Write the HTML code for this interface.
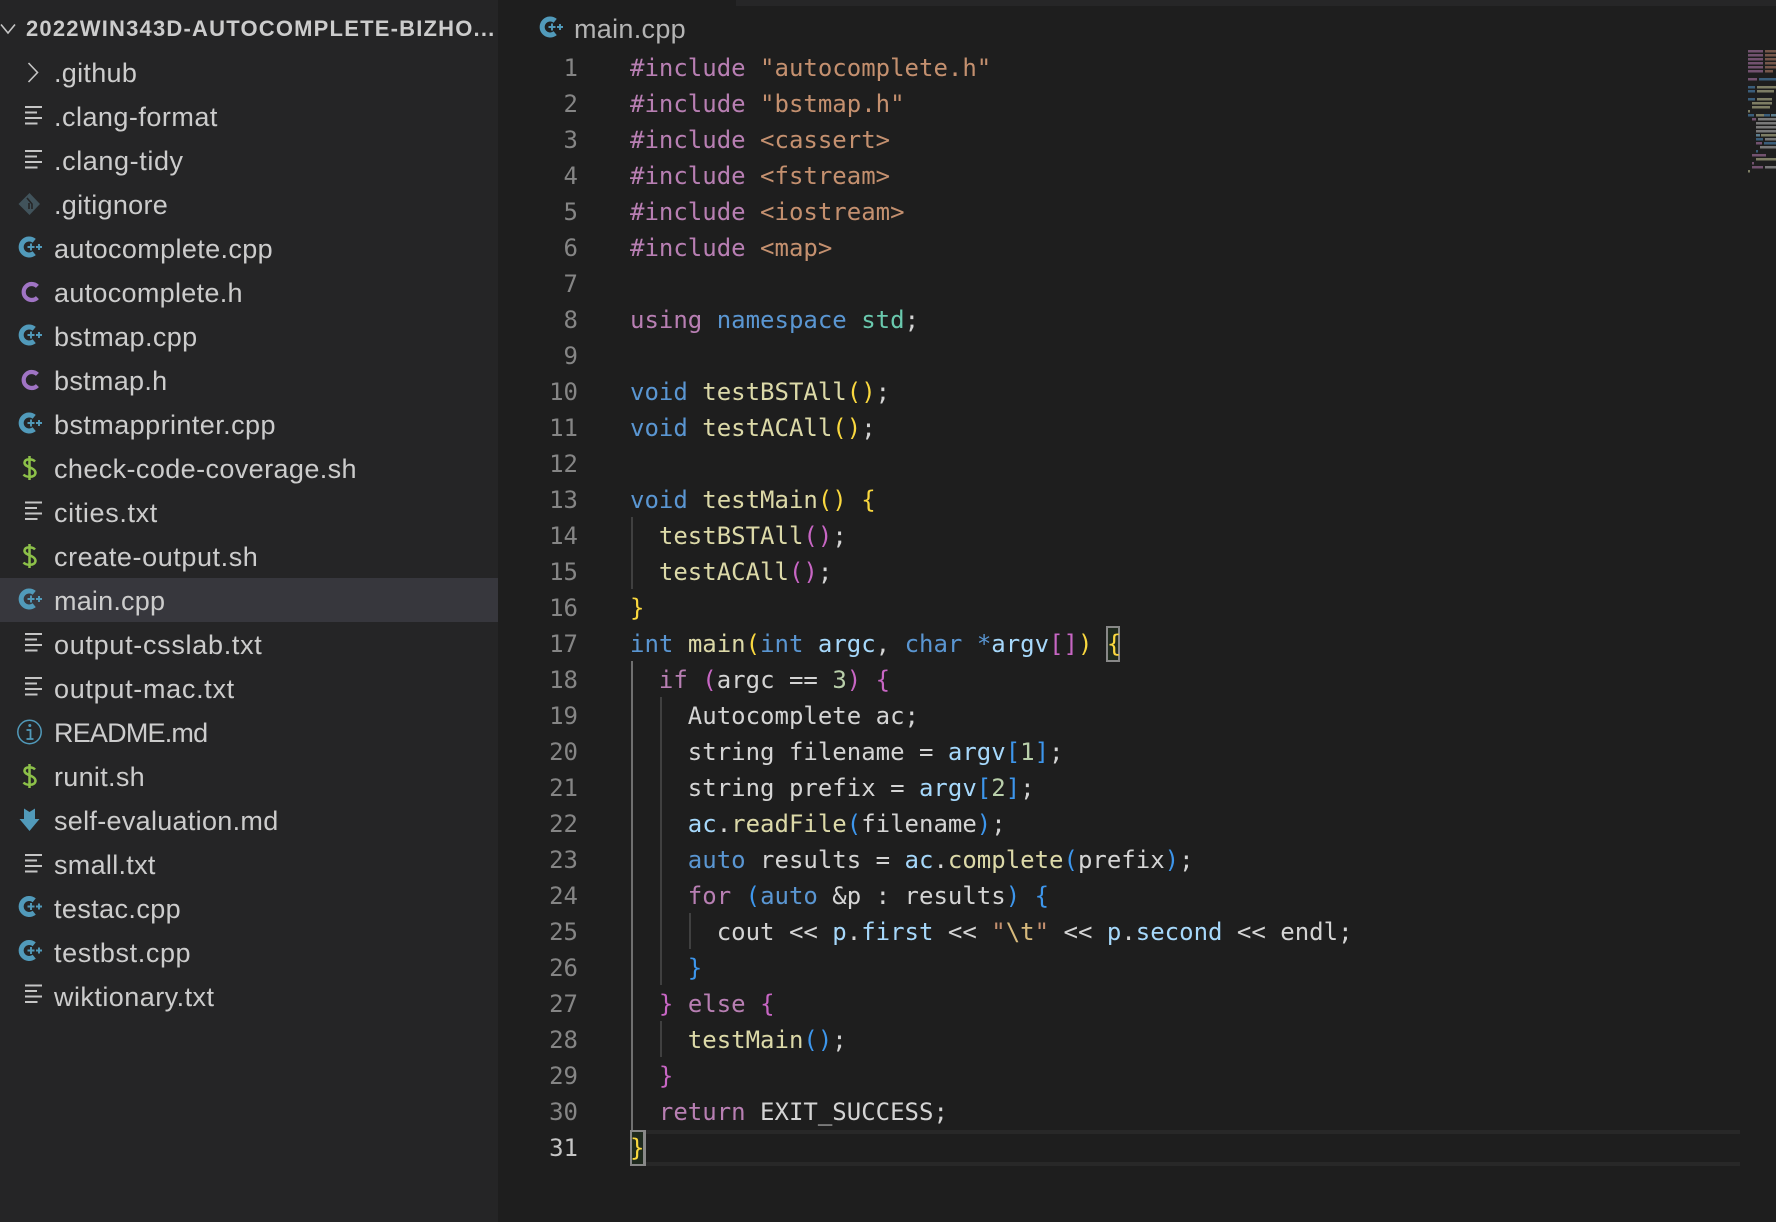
<!DOCTYPE html>
<html lang="en"><head><meta charset="utf-8"><title>main.cpp</title>
<style>
html,body{margin:0;padding:0;background:#1e1e1e}
body{width:1776px;height:1222px;position:relative;overflow:hidden;filter:blur(.35px)}
#side{position:absolute;left:0;top:0;width:498px;height:1222px;background:#252526}
.hd{position:absolute;left:26px;top:15px;font:bold 22px/28px "Liberation Sans",sans-serif;color:#ccc;white-space:nowrap;letter-spacing:1.2px}
.r{position:absolute;left:54px;height:44px;margin-top:1px;font:27px/44px "Liberation Sans",sans-serif;letter-spacing:.3px;color:#ccc;white-space:nowrap}
.act{position:absolute;left:0;top:578px;width:498px;height:44px;background:#37373d}
#ic{position:absolute;left:0;top:0}
.tab{position:absolute;left:574px;top:7px;font:27px/44px "Liberation Sans",sans-serif;letter-spacing:.3px;color:#b4b4b4}
.topbar{position:absolute;left:736px;top:0;width:1040px;height:6px;background:#262627}
.ln{position:absolute;left:520px;width:58px;margin-top:1px;text-align:right;font:24px/36px "DejaVu Sans Mono",monospace;color:#858585}
.c{position:absolute;left:630px;margin-top:1px;font:24px/36px "DejaVu Sans Mono",monospace;color:#d4d4d4;white-space:pre}
.g{position:absolute;width:1.5px;background:#404040}
.cur{position:absolute;left:631px;top:1130px;width:1109px;height:28px;border:4px solid #282828;border-left:0;border-right:0}
.bx{position:absolute;box-sizing:border-box;border:2px solid #888;background:#1f2a1e}
.k{color:#b87fb3}.b{color:#5a96d2}.s{color:#c4906f}.f{color:#dcd9a8}.v{color:#a6d8fb}.t{color:#6ac9ae}.n{color:#b9cfaa}.e{color:#d7ba7d}
.y{color:#fad83f}.m{color:#c866c4}.u{color:#3d96ec}
#mm{position:absolute;left:1748px;top:50px;opacity:.5}
</style></head><body>
<div class="topbar"></div>
<div id="side"></div>
<div class="act"></div>
<div class="hd">2022WIN343D-AUTOCOMPLETE-BIZHO...</div>
<div class="r" style="top:50px">.github</div>
<div class="r" style="top:94px;letter-spacing:.48px">.clang-format</div>
<div class="r" style="top:138px;letter-spacing:.6px">.clang-tidy</div>
<div class="r" style="top:182px">.gitignore</div>
<div class="r" style="top:226px;letter-spacing:.37px">autocomplete.cpp</div>
<div class="r" style="top:270px">autocomplete.h</div>
<div class="r" style="top:314px;letter-spacing:.4px">bstmap.cpp</div>
<div class="r" style="top:358px">bstmap.h</div>
<div class="r" style="top:402px;letter-spacing:.43px">bstmapprinter.cpp</div>
<div class="r" style="top:446px;letter-spacing:.4px">check-code-coverage.sh</div>
<div class="r" style="top:490px;letter-spacing:.64px">cities.txt</div>
<div class="r" style="top:534px;letter-spacing:.58px">create-output.sh</div>
<div class="r" style="top:578px;letter-spacing:.2px">main.cpp</div>
<div class="r" style="top:622px;letter-spacing:.7px">output-csslab.txt</div>
<div class="r" style="top:666px;letter-spacing:.7px">output-mac.txt</div>
<div class="r" style="top:710px;letter-spacing:-.8px">README.md</div>
<div class="r" style="top:754px">runit.sh</div>
<div class="r" style="top:798px">self-evaluation.md</div>
<div class="r" style="top:842px">small.txt</div>
<div class="r" style="top:886px;letter-spacing:.4px">testac.cpp</div>
<div class="r" style="top:930px;letter-spacing:.6px">testbst.cpp</div>
<div class="r" style="top:974px;letter-spacing:.46px">wiktionary.txt</div>
<svg id="ic" width="600" height="1040" viewBox="0 0 600 1040" fill="none">
<defs>
<g id="cpp"><path d="M6.2 -6.2A8 8 0 1 0 6.2 6.2" stroke="#519aba" stroke-width="5"/><path d="M3 -3.5V3.5M-.5 0H6.5M11 -3V3M8 0H14" stroke="#519aba" stroke-width="1.9"/></g>
<g id="txt"><path d="M25 -9.5H42M25 -4H37M25 1.5H42M25 7H37.5" stroke="#c5c5c5" stroke-width="2"/></g>
<g id="sh"><path d="M35 -6.5C33 -9 25 -10 24.5 -5.5C24 -.5 35.5 -1 35.5 5C35 10 26 9.5 23.5 6.5M29.5 -12V12" stroke="#8dc149" stroke-width="2.5"/></g>
<g id="h"><path d="M37.4 -5.6A8 8 0 1 0 37.4 5.6" stroke="#a074c4" stroke-width="4.2"/></g>
</defs>
<path d="M1 24.5L8 33L15 24.5" stroke="#c5c5c5" stroke-width="1.6"/>
<path d="M28.5 63L37.5 72.5L28.5 82" stroke="#c5c5c5" stroke-width="1.6"/>
<use href="#txt" y="116.5"/><use href="#txt" y="160.5"/>
<path d="M29.5 193L40 204L29.5 215L18.500 204Z" fill="#41535b"/><path d="M27 198L32 204V209M29 203V209" stroke="#252526" stroke-width="1.6"/>
<use href="#cpp" x="28" y="247"/>
<use href="#h" y="292"/>
<use href="#cpp" x="28" y="335"/>
<use href="#h" y="380"/>
<use href="#cpp" x="28" y="423"/>
<use href="#sh" y="468"/>
<use href="#txt" y="512"/>
<use href="#sh" y="556"/>
<use href="#cpp" x="28" y="599"/>
<use href="#txt" y="643.500"/><use href="#txt" y="687.500"/>
<circle cx="29.500" cy="732" r="11.700" stroke="#519aba" stroke-width="1.500"/><path d="M26.500 730H30.500V739M26.500 739H33.500" stroke="#519aba" stroke-width="1.800"/><circle cx="29.800" cy="725.500" r="1.500" fill="#519aba"/>
<use href="#sh" y="776"/>
<path d="M24 808.500L29.500 812L35 808.500V819H39.500L29.500 831L19.500 819H24Z" fill="#519aba"/>
<use href="#txt" y="864.500"/>
<use href="#cpp" x="28" y="906.500"/>
<use href="#cpp" x="28" y="950.500"/>
<use href="#txt" y="995"/>
<use href="#cpp" x="549" y="27"/>
</svg>
<div class="tab">main.cpp</div>

<div class="cur"></div>
<div class="g" style="left:631px;top:517px;height:72px"></div>
<div class="g" style="left:631px;top:661px;height:469px;width:2px;background:#707070"></div>
<div class="g" style="left:660px;top:697px;height:288px"></div>
<div class="g" style="left:660px;top:1021px;height:36px"></div>
<div class="g" style="left:689px;top:913px;height:36px"></div>
<div class="bx" style="left:1106px;top:626px;width:14px;height:36px"></div>
<div class="bx" style="left:630px;top:1130px;width:16px;height:36px;border-right-width:3px"></div>

<div class="ln" style="top:49px">1</div><div class="c" style="top:49px"><span class="k">#include</span> <span class="s">"autocomplete.h"</span></div>
<div class="ln" style="top:85px">2</div><div class="c" style="top:85px"><span class="k">#include</span> <span class="s">"bstmap.h"</span></div>
<div class="ln" style="top:121px">3</div><div class="c" style="top:121px"><span class="k">#include</span> <span class="s">&lt;cassert&gt;</span></div>
<div class="ln" style="top:157px">4</div><div class="c" style="top:157px"><span class="k">#include</span> <span class="s">&lt;fstream&gt;</span></div>
<div class="ln" style="top:193px">5</div><div class="c" style="top:193px"><span class="k">#include</span> <span class="s">&lt;iostream&gt;</span></div>
<div class="ln" style="top:229px">6</div><div class="c" style="top:229px"><span class="k">#include</span> <span class="s">&lt;map&gt;</span></div>
<div class="ln" style="top:265px">7</div>
<div class="ln" style="top:301px">8</div><div class="c" style="top:301px"><span class="k">using</span> <span class="b">namespace</span> <span class="t">std</span>;</div>
<div class="ln" style="top:337px">9</div>
<div class="ln" style="top:373px">10</div><div class="c" style="top:373px"><span class="b">void</span> <span class="f">testBSTAll</span><span class="y">()</span>;</div>
<div class="ln" style="top:409px">11</div><div class="c" style="top:409px"><span class="b">void</span> <span class="f">testACAll</span><span class="y">()</span>;</div>
<div class="ln" style="top:445px">12</div>
<div class="ln" style="top:481px">13</div><div class="c" style="top:481px"><span class="b">void</span> <span class="f">testMain</span><span class="y">()</span> <span class="y">{</span></div>
<div class="ln" style="top:517px">14</div><div class="c" style="top:517px">  <span class="f">testBSTAll</span><span class="m">()</span>;</div>
<div class="ln" style="top:553px">15</div><div class="c" style="top:553px">  <span class="f">testACAll</span><span class="m">()</span>;</div>
<div class="ln" style="top:589px">16</div><div class="c" style="top:589px"><span class="y">}</span></div>
<div class="ln" style="top:625px">17</div><div class="c" style="top:625px"><span class="b">int</span> <span class="f">main</span><span class="y">(</span><span class="b">int</span> <span class="v">argc</span>, <span class="b">char</span> <span class="b">*</span><span class="v">argv</span><span class="m">[]</span><span class="y">)</span> <span class="y">{</span></div>
<div class="ln" style="top:661px">18</div><div class="c" style="top:661px">  <span class="k">if</span> <span class="m">(</span>argc == <span class="n">3</span><span class="m">)</span> <span class="m">{</span></div>
<div class="ln" style="top:697px">19</div><div class="c" style="top:697px">    Autocomplete ac;</div>
<div class="ln" style="top:733px">20</div><div class="c" style="top:733px">    string filename = <span class="v">argv</span><span class="u">[</span><span class="n">1</span><span class="u">]</span>;</div>
<div class="ln" style="top:769px">21</div><div class="c" style="top:769px">    string prefix = <span class="v">argv</span><span class="u">[</span><span class="n">2</span><span class="u">]</span>;</div>
<div class="ln" style="top:805px">22</div><div class="c" style="top:805px">    <span class="v">ac</span>.<span class="f">readFile</span><span class="u">(</span>filename<span class="u">)</span>;</div>
<div class="ln" style="top:841px">23</div><div class="c" style="top:841px">    <span class="b">auto</span> results = <span class="v">ac</span>.<span class="f">complete</span><span class="u">(</span>prefix<span class="u">)</span>;</div>
<div class="ln" style="top:877px">24</div><div class="c" style="top:877px">    <span class="k">for</span> <span class="u">(</span><span class="b">auto</span> &amp;p : results<span class="u">)</span> <span class="u">{</span></div>
<div class="ln" style="top:913px">25</div><div class="c" style="top:913px">      cout &lt;&lt; <span class="v">p</span>.<span class="v">first</span> &lt;&lt; <span class="s">"</span><span class="e">\t</span><span class="s">"</span> &lt;&lt; <span class="v">p</span>.<span class="v">second</span> &lt;&lt; endl;</div>
<div class="ln" style="top:949px">26</div><div class="c" style="top:949px">    <span class="u">}</span></div>
<div class="ln" style="top:985px">27</div><div class="c" style="top:985px">  <span class="m">}</span> <span class="k">else</span> <span class="m">{</span></div>
<div class="ln" style="top:1021px">28</div><div class="c" style="top:1021px">    <span class="f">testMain</span><span class="u">()</span>;</div>
<div class="ln" style="top:1057px">29</div><div class="c" style="top:1057px">  <span class="m">}</span></div>
<div class="ln" style="top:1093px">30</div><div class="c" style="top:1093px">  <span class="k">return</span> EXIT_SUCCESS;</div>
<div class="ln" style="top:1129px;color:#c6c6c6">31</div><div class="c" style="top:1129px"><span class="y">}</span></div>

<svg id="mm" width="28" height="126" viewBox="0 0 28 126">
<g fill="#c586c0"><rect y="0" width="15" height="2.500"/><rect y="4" width="15" height="2.500"/><rect y="8" width="15" height="2.500"/><rect y="12" width="15" height="2.500"/><rect y="16" width="15" height="2.500"/><rect y="20" width="15" height="2.500"/><rect y="28" width="9" height="2.500"/><rect x="4" y="68" width="4" height="2.500"/><rect x="8" y="92" width="6" height="2.500"/><rect x="4" y="104" width="14" height="2.500"/><rect x="4" y="112" width="2" height="2.500"/><rect x="4" y="116" width="11" height="2.500"/></g>
<g fill="#ce9178"><rect x="17" y="0" width="11" height="2.500"/><rect x="17" y="4" width="11" height="2.500"/><rect x="17" y="8" width="11" height="2.500"/><rect x="17" y="12" width="11" height="2.500"/><rect x="17" y="16" width="11" height="2.500"/><rect x="17" y="20" width="8" height="2.500"/></g>
<g fill="#569cd6"><rect x="11" y="28" width="17" height="2.500"/><rect y="36" width="7" height="2.500"/><rect y="40" width="7" height="2.500"/><rect y="48" width="7" height="2.500"/><rect y="64" width="6" height="2.500"/><rect x="16" y="64" width="6" height="2.500"/><rect x="8" y="88" width="7" height="2.500"/><rect x="16" y="92" width="12" height="2.500"/><rect x="8" y="100" width="2" height="2.500"/></g>
<g fill="#dcdcaa"><rect x="9" y="36" width="19" height="2.500"/><rect x="9" y="40" width="17" height="2.500"/><rect x="9" y="48" width="15" height="2.500"/><rect x="4" y="52" width="20" height="2.500"/><rect x="4" y="56" width="18" height="2.500"/><rect x="8" y="64" width="8" height="2.500"/><rect x="13" y="84" width="15" height="2.500"/><rect x="8" y="108" width="20" height="2.500"/><rect y="60" width="2" height="2.500"/><rect y="120" width="2" height="2.500"/></g>
<g fill="#d4d4d4"><rect x="10" y="68" width="18" height="2.500"/><rect x="8" y="72" width="20" height="2.500"/><rect x="8" y="76" width="20" height="2.500"/><rect x="8" y="80" width="20" height="2.500"/><rect x="17" y="88" width="11" height="2.500"/><rect x="12" y="96" width="16" height="2.500"/><rect x="17" y="116" width="11" height="2.500"/></g>
<g fill="#9cdcfe"><rect x="8" y="84" width="4" height="2.500"/><rect x="23" y="64" width="5" height="2.500"/></g>
</svg>
</body></html>
